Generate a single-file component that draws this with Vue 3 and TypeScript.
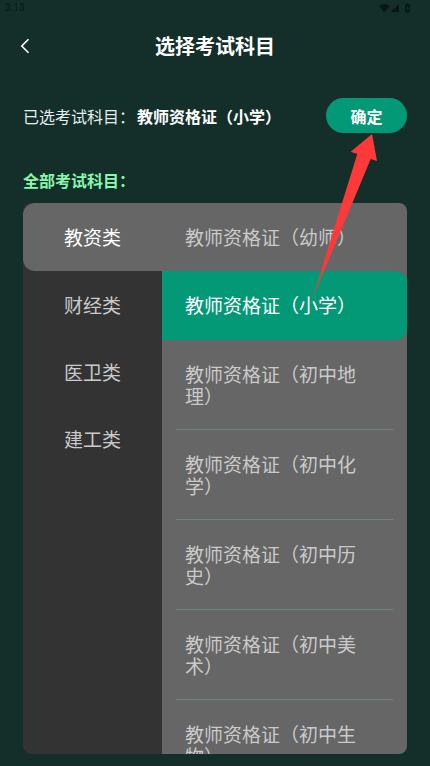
<script setup lang="ts">
import { computed, ref } from 'vue'

interface Category {
  name: string
  subjects: string[]
}

const categories: Category[] = [
  {
    name: '教资类',
    subjects: [
      '教师资格证（幼师）',
      '教师资格证（小学）',
      '教师资格证（初中地理）',
      '教师资格证（初中化学）',
      '教师资格证（初中历史）',
      '教师资格证（初中美术）',
      '教师资格证（初中生物）',
    ],
  },
  { name: '财经类', subjects: [] },
  { name: '医卫类', subjects: [] },
  { name: '建工类', subjects: [] },
]

const activeCategory = ref(0)
const selected = ref('教师资格证（小学）')
const subjects = computed(() => categories[activeCategory.value].subjects)
const selectedIndex = computed(() => subjects.value.indexOf(selected.value))
</script>

<template>
  <div class="page">
    <div class="status">
      <span>3:13</span>
      <svg class="status-icons" width="32" height="10" viewBox="0 0 32 10" aria-hidden="true">
        <path d="M0 3.2C3 .3 7.600 .3 10.600 3.200L5.300 9.500Z" />
        <path d="M20 .8V9.300H11.500Z" />
        <path fill-rule="evenodd" d="M26.500 1.200H27.500V.3H29.500V1.200H30.500Q31 1.200 31 1.800V9Q31 9.600 30.500 9.600H26.500Q26 9.600 26 9V1.800Q26 1.200 26.500 1.200ZM29 2.800L27.200 5.800H28.300V8.200L30 5H29Z" />
      </svg>
    </div>

    <header class="header">
      <button class="back" type="button" aria-label="返回">
        <svg width="10" height="16" viewBox="0 0 10 16" aria-hidden="true">
          <path d="M8.500 1.300L1.800 8L8.500 14.700" />
        </svg>
      </button>
      <h1>选择考试科目</h1>
    </header>

    <section class="current">
      <p><span>已选考试科目：</span><strong>{{ selected }}</strong></p>
      <button class="confirm" type="button">确定</button>
    </section>

    <h2>全部考试科目：</h2>

    <main class="panel">
      <nav class="categories">
        <button
          v-for="(category, i) in categories"
          :key="category.name"
          class="category"
          :class="{ active: i === activeCategory }"
          type="button"
          @click="activeCategory = i"
        >
          {{ category.name }}
        </button>
      </nav>
      <div class="subjects">
        <button
          v-for="(subject, i) in subjects"
          :key="subject"
          class="subject"
          :class="{ selected: i === selectedIndex, before: i === selectedIndex - 1 }"
          type="button"
          @click="selected = subject"
        >
          <span>{{ subject }}</span>
        </button>
      </div>
    </main>

    <svg class="pointer" width="66" height="167" viewBox="0 0 66 167" aria-hidden="true">
      <defs>
        <linearGradient id="tail" x1="0" y1="0" x2="0" y2="1">
          <stop offset="0.700" stop-color="#fd3a39" />
          <stop offset="1" stop-color="#fd3a39" stop-opacity="0.500" />
        </linearGradient>
      </defs>
      <path fill="url(#tail)" d="M61 0L66 27L59.700 25L.5 167L46.300 20L39.700 17.800Z" />
    </svg>
  </div>
</template>

<style>
body {
  margin: 0;
  background: #142f2a;
}
</style>

<style scoped>
.page {
  position: relative;
  display: flex;
  flex-direction: column;
  box-sizing: border-box;
  height: 100vh;
  padding-bottom: 12px;
  background: #142f2a;
  color: #fff;
  font-family: "Noto Sans CJK SC", sans-serif;
}

button {
  margin: 0;
  padding: 0;
  border: 0;
  background: none;
  color: inherit;
  font: inherit;
  cursor: pointer;
}

.status {
  display: flex;
  align-items: center;
  justify-content: space-between;
  height: 16px;
  padding: 0 19px 0 5px;
  color: #071d19;
  font: 500 10px/16px Roboto, sans-serif;
}

.status-icons {
  fill: #051a16;
}

.header {
  display: grid;
  grid-template-columns: 1fr auto 1fr;
  align-items: center;
  height: 60px;
  padding: 0 20px;
}

.back {
  display: flex;
  justify-self: start;
}

.back svg {
  fill: none;
  stroke: #fff;
  stroke-width: 1.6;
}

h1 {
  margin: 0;
  font-size: 20px;
  font-weight: 700;
  line-height: 28px;
}

.current {
  display: flex;
  align-items: center;
  justify-content: space-between;
  margin-top: 22px;
  padding: 0 23px;
  font-size: 16px;
  line-height: 24px;
}

.current p {
  display: flex;
  gap: 2px;
  margin: 0;
}

.current span {
  color: #e6eeec;
}

.confirm {
  width: 81px;
  height: 35px;
  border-radius: 18px;
  background: #049976;
  font-weight: 700;
}

h2 {
  margin: 35px 23px 11px;
  color: #86f8ab;
  font-size: 16px;
  font-weight: 700;
  line-height: 24px;
}

.panel {
  display: flex;
  flex: 1;
  min-height: 0;
  margin: 0 23px;
  border-radius: 8px;
  overflow: hidden;
  font-size: 19px;
  line-height: 22px;
  color: #cacaca;
}

.categories {
  display: flex;
  flex: 0 0 139px;
  flex-direction: column;
  background: #333;
}

.category {
  height: 67px;
}

.category.active {
  height: 68px;
  border-radius: 12px 0 0 12px;
  background: #666;
  color: #fff;
}

.subjects {
  display: flex;
  flex: 1;
  flex-direction: column;
  overflow-y: auto;
  scrollbar-width: none;
  background: #666;
}

.subject {
  flex: none;
  padding: 0 14px;
  text-align: left;
}

.subject span {
  display: block;
  padding: 23px 14px 22px 9px;
  border-bottom: 1px solid #6d857c;
}

.subject.before span {
  border-color: transparent;
}

.subject.selected {
  border-radius: 0 12px 12px 0;
  background: #049976;
  color: #fff;
}

.subject.selected span {
  padding-bottom: 23px;
  border-color: transparent;
}

.pointer {
  position: absolute;
  top: 134px;
  right: 53px;
  pointer-events: none;
}
</style>
